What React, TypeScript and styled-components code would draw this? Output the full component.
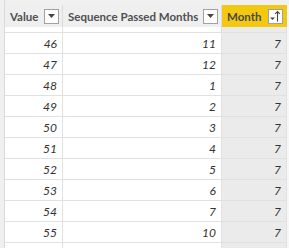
import React from "react";
import styled, { createGlobalStyle } from "styled-components";

const GlobalStyle = createGlobalStyle`
  html, body {
    margin: 0;
    padding: 0;
    background: #ffffff;
  }
  body {
    font-family: "Lato", "Liberation Sans", sans-serif;
  }
`;

const Frame = styled.div`
  width: 289px;
  height: 248px;
  overflow: hidden;
  display: flex;
  background: #f0f0f0;
`;

const LeftStrip = styled.div`
  width: 4px;
  flex: none;
  border-right: 1px solid #dadada;
`;

const Pane = styled.div`
  flex: 1;
  display: flex;
  flex-direction: column;
  padding-top: 5px;
  min-width: 0;
`;

const Grid = styled.div`
  display: grid;
  grid-template-columns: 58px 159px 65px 2px;
`;

const HeaderCell = styled.div<{ $active?: boolean }>`
  height: 22px;
  min-width: 0;
  display: flex;
  align-items: center;
  justify-content: space-between;
  gap: 4px;
  padding: 0 3px 0 5px;
  background: ${(p) => (p.$active ? "#f2c811" : "#efefef")};
  border-right: 1px solid ${(p) => (p.$active ? "#f2c811" : "#dcdcdc")};
  box-sizing: border-box;
  font-weight: 700;
  font-size: 11.5px;
  color: ${(p) => (p.$active ? "#4a4a3a" : "#505050")};
  white-space: nowrap;
`;

const EdgeCell = styled.div`
  background: #f7f7f7;
`;

const FilterButton = styled.div`
  width: 15px;
  height: 15px;
  flex: none;
  box-sizing: border-box;
  border: 1px solid #a0a0a0;
  background: #ffffff;
  display: flex;
  align-items: center;
  justify-content: center;
`;

const Body = styled.div`
  flex: 1;
  overflow: hidden;
  background: #ffffff;
`;

const Rows = styled.div`
  margin-top: -15px;
`;

const Cell = styled.div<{ $sorted?: boolean }>`
  height: 21px;
  box-sizing: border-box;
  border-bottom: 1px solid #e1e1e1;
  border-right: 1px solid #e1e1e1;
  background: ${(p) => (p.$sorted ? "#ebebeb" : "#ffffff")};
  display: flex;
  align-items: center;
  justify-content: flex-end;
  padding-right: 5px;
  font-style: italic;
  font-size: 12px;
  color: #333333;
`;

const EdgeBody = styled.div`
  height: 21px;
  background: #f7f7f7;
`;

const DownArrow = () => (
  <svg width="7" height="4" viewBox="0 0 7 4">
    <path d="M0 0h7L3.5 4z" fill="#444" />
  </svg>
);

const SortIcon = () => (
  <svg width="11" height="12" viewBox="0 0 11 12">
    <path d="M0 7.5h5L2.5 10z" fill="#444" />
    <path d="M7.5 11.5V1.5M5.2 3.8L7.5 1.5l2.3 2.3" stroke="#444" strokeWidth="1.1" fill="none" />
  </svg>
);

const rows: [number, number, number][] = [
  [45, 9, 6],
  [46, 11, 7],
  [47, 12, 7],
  [48, 1, 7],
  [49, 2, 7],
  [50, 3, 7],
  [51, 4, 7],
  [52, 5, 7],
  [53, 6, 7],
  [54, 7, 7],
  [55, 10, 7],
  [56, 8, 7],
];

export default function App() {
  return (
    <>
      <GlobalStyle />
      <Frame>
        <LeftStrip />
        <Pane>
          <Grid>
            <HeaderCell>
              <span>Value</span>
              <FilterButton>
                <DownArrow />
              </FilterButton>
            </HeaderCell>
            <HeaderCell>
              <span>Sequence Passed Months</span>
              <FilterButton>
                <DownArrow />
              </FilterButton>
            </HeaderCell>
            <HeaderCell $active>
              <span>Month</span>
              <FilterButton>
                <SortIcon />
              </FilterButton>
            </HeaderCell>
            <EdgeCell />
          </Grid>
          <Body>
            <Rows>
              <Grid>
                {rows.map(([v, s, m]) => (
                  <React.Fragment key={v}>
                    <Cell>{v}</Cell>
                    <Cell>{s}</Cell>
                    <Cell $sorted>{m}</Cell>
                    <EdgeBody />
                  </React.Fragment>
                ))}
              </Grid>
            </Rows>
          </Body>
        </Pane>
      </Frame>
    </>
  );
}
